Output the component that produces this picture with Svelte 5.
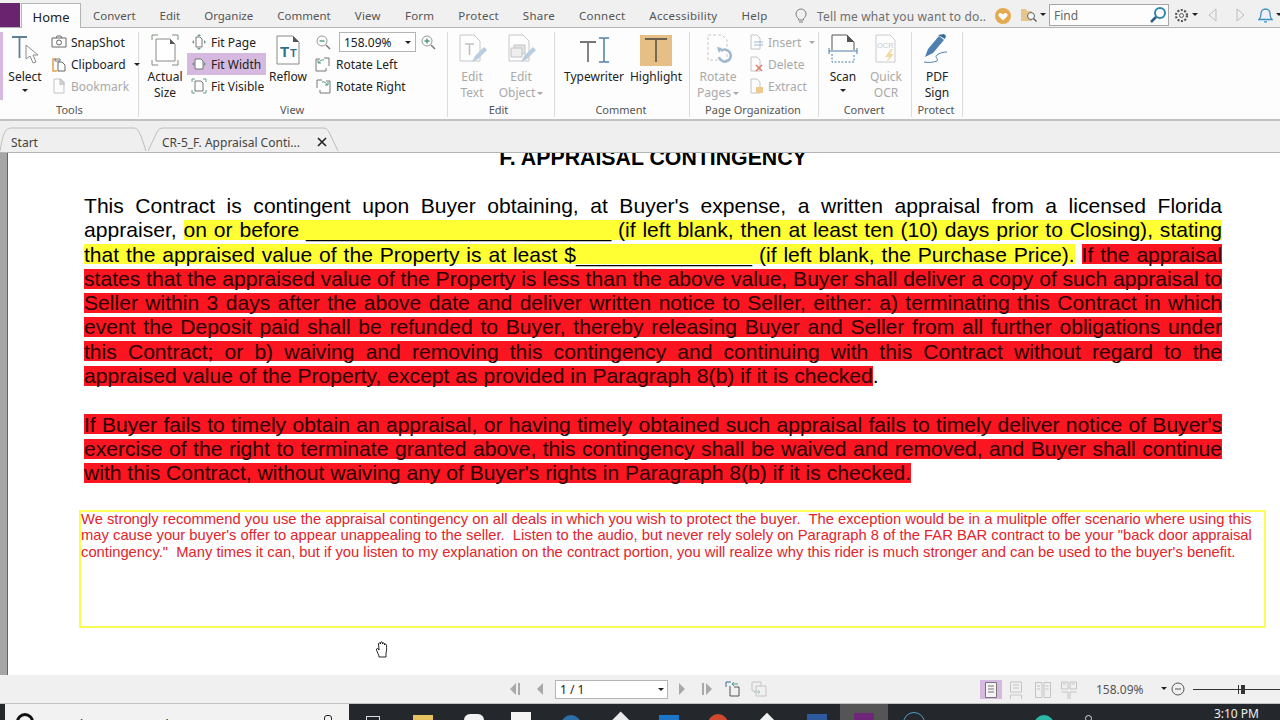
<script lang="ts">
  const menuTabs = ['Convert', 'Edit', 'Organize', 'Comment', 'View', 'Form', 'Protect', 'Share', 'Connect', 'Accessibility', 'Help']
</script>

<div class="window">
  <header class="menubar">
    <div class="file-tab"></div>
    <div class="home-tab">Home</div>
    {#each menuTabs as tab}
      <div class="menu-item">{tab}</div>
    {/each}
    <svg class="bulb" width="14" height="16" viewBox="0 0 14 16" fill="none" stroke="#7d7d7d"><path d="M4.5 10.5C2.5 9 2 7.5 2 6a5 5 0 0 1 10 0c0 1.5-.5 3-2.500 4.500V12h-5zM5 14h4"/></svg>
    <div class="tell-me">Tell me what you want to do..</div>
    <svg class="heart" width="18" height="18" viewBox="0 0 18 18"><circle cx="9" cy="9" r="8" fill="#e5a94f"/><path d="M9 13.500 4.800 9.200C3.500 7.500 5.800 5 7.500 6.200L9 7.500l1.500-1.300c1.700-1.200 4 1.300 2.700 3z" fill="#fff"/></svg>
    <svg class="folder" width="18" height="16" viewBox="0 0 18 16" fill="none"><path d="M1 2h5l1 2h5v10H1z" fill="#e7c68e"/><circle cx="11" cy="9" r="3.500" fill="#f5f5f5" stroke="#666"/><path d="m13.500 11.500 3 3" stroke="#555" stroke-width="1.300"/></svg>
    <span class="caret dark folder-caret"></span>
    <div class="find">
      <span>Find</span>
      <svg width="18" height="18" viewBox="0 0 18 18" fill="none"><circle cx="11" cy="7" r="5" stroke="#2f86a8" stroke-width="2"/><path d="m7 11-5 5" stroke="#2b5d8f" stroke-width="2.500"/></svg>
    </div>
    <svg class="gear" width="15" height="15" viewBox="0 0 15 15" fill="none" stroke="#555"><circle cx="7.500" cy="7.500" r="2"/><circle cx="7.500" cy="7.500" r="5.500" stroke-width="2.200" stroke-dasharray="2 1.500"/></svg>
    <span class="caret dark gear-caret"></span>
    <svg class="nav-left" width="9" height="14" viewBox="0 0 9 14" fill="none" stroke="#bdbdbd"><path d="M8 1 1 7l7 6z"/></svg>
    <svg class="nav-right" width="9" height="14" viewBox="0 0 9 14" fill="none" stroke="#bdbdbd"><path d="m1 1 7 6-7 6z"/></svg>
    <svg class="bell" width="15" height="16" viewBox="0 0 15 16" fill="none" stroke="#3d8fc2" stroke-width="1.300"><path d="M1 12.500h13c-1.500-1.500-2-2.500-2-6a4.500 4.500 0 0 0-9 0c0 3.500-.5 4.500-2 6zM6 14.800h3"/></svg>
    <span class="caret dark bell-caret"></span>
  </header>

  <section class="ribbon">
    <div class="strip"></div>

    <div class="group tools">
      <div class="group-body">
        <div class="big select-btn">
          <svg width="36" height="36" viewBox="0 0 36 36" fill="none"><path d="M5 5h15M12.500 5v21" stroke="#5c8196" stroke-width="1.800"/><path d="M19 13v14l4-3 3 7 3-1-3-7h5z" fill="#fff" stroke="#8c8c8c"/></svg>
          <span>Select</span>
          <span class="caret dark"></span>
        </div>
        <div class="col tools-col">
          <div class="row">
            <svg width="16" height="16" viewBox="0 0 16 16" fill="none" stroke="#666"><path d="M1 4h14v9H1zM5 4l1-2h4l1 2"/><circle cx="8" cy="8.500" r="2.500"/></svg>
            <span>SnapShot</span>
          </div>
          <div class="row">
            <svg width="16" height="16" viewBox="0 0 16 16" fill="none"><path d="M5 3H2v12h4" stroke="#e0a04a" stroke-width="1.500"/><path d="M7 6h4l3 3v6H7z" fill="#fff" stroke="#666"/><path d="M4 3h5v2H4z" fill="#fff" stroke="#777"/></svg>
            <span>Clipboard</span>
            <span class="caret dark"></span>
          </div>
          <div class="row off">
            <svg width="16" height="16" viewBox="0 0 16 16" fill="none" stroke="#c4c4c4"><path d="M3 1h7l3 3v11H3z"/><path d="M9 1v6l2-1 2 1V4z" fill="#d0d0d0"/></svg>
            <span>Bookmark</span>
          </div>
        </div>
      </div>
      <div class="group-label">Tools</div>
    </div>

    <div class="group view">
      <div class="group-body">
        <div class="big actual-btn">
          <svg width="36" height="36" viewBox="0 0 36 36" fill="none"><path d="M9 7h14l5 5v17H9z" fill="#fff" stroke="#8a8a8a"/><path d="M23 7v5h5z" fill="#555"/><path d="M5 8V3h6M31 8V3h-6M5 28v5h6M31 28v5h-6" stroke="#7f8f7f"/></svg>
          <span>Actual</span>
          <span>Size</span>
        </div>
        <div class="col fit-col">
          <div class="row">
            <svg width="16" height="16" viewBox="0 0 16 16" fill="none"><path d="M5 3h4l2 2v8H5z" stroke="#777"/><path d="m8 0-2 2h4zm0 16-2-2h4zM1 8l2-2v4zm14 0-2-2v4z" fill="#6a9a8a"/></svg>
            <span>Fit Page</span>
          </div>
          <div class="row active">
            <svg width="16" height="16" viewBox="0 0 16 16" fill="none"><path d="M4 3h6l2 2v8H4z" fill="#fff" stroke="#777"/><path d="M1 8l2-2v4zm14 0-2-2v4z" fill="#6a9a8a"/></svg>
            <span>Fit Width</span>
          </div>
          <div class="row">
            <svg width="16" height="16" viewBox="0 0 16 16" fill="none"><path d="M4 3h6l2 2v8H4z" stroke="#777"/><path d="M1 4V1h3M15 4V1h-3M1 12v3h3M15 12v3h-3" stroke="#6a9a8a"/></svg>
            <span>Fit Visible</span>
          </div>
        </div>
        <div class="big reflow-btn">
          <svg width="36" height="36" viewBox="0 0 36 36" fill="none"><path d="M7 4h16l6 6v22H7z" fill="#fff" stroke="#8a8a8a"/><path d="M23 4v6h6z" fill="#555"/><text x="10" y="25" class="reflow-t">T</text><text x="20" y="25" class="reflow-s">T</text></svg>
          <span>Reflow</span>
        </div>
        <div class="col zoom-col">
          <div class="row zoom-row">
            <svg width="16" height="16" viewBox="0 0 16 16" fill="none"><circle cx="7" cy="7" r="5" stroke="#999"/><path d="M4.500 7h5" stroke="#4b9a7e" stroke-width="1.400"/><path d="m11 11 4 4" stroke="#777" stroke-width="1.500"/></svg>
            <div class="zoom-box">158.09%<span class="caret dark"></span></div>
            <svg width="16" height="16" viewBox="0 0 16 16" fill="none"><circle cx="7" cy="7" r="5" stroke="#999"/><path d="M4.500 7h5M7 4.500v5" stroke="#4b9a7e" stroke-width="1.400"/><path d="m11 11 4 4" stroke="#777" stroke-width="1.500"/></svg>
          </div>
          <div class="row rotate">
            <svg width="16" height="16" viewBox="0 0 16 16" fill="none" stroke="#777"><path d="M5 3H1v12h10v-3M9 2h5v8"/><path d="M4 7a4 4 0 0 1 5-3M3 4v3h3" stroke="#4b9a7e"/></svg>
            <span>Rotate Left</span>
          </div>
          <div class="row rotate">
            <svg width="16" height="16" viewBox="0 0 16 16" fill="none" stroke="#777"><path d="M11 3h4v12H5v-3M7 2H2v8"/><path d="M12 7a4 4 0 0 0-5-3M13 4v3h-3" stroke="#4b9a7e"/></svg>
            <span>Rotate Right</span>
          </div>
        </div>
      </div>
      <div class="group-label">View</div>
    </div>

    <div class="group edit">
      <div class="group-body">
        <div class="big off edit-btn">
          <svg width="36" height="36" viewBox="0 0 36 36" fill="none"><path d="M6 3h14l6 6v20H6z" stroke="#c8c8c8"/><path d="M11 12h9M15.500 12v11" stroke="#c0c0c0" stroke-width="1.600"/><path d="m18 30 3-6 9-9 3 3-9 9z" fill="#b9cde0"/></svg>
          <span>Edit</span>
          <span>Text</span>
        </div>
        <div class="big off edit-btn">
          <svg width="36" height="36" viewBox="0 0 36 36" fill="none"><path d="M6 3h14l6 6v20H6z" stroke="#c8c8c8"/><path d="M11 13h11v9H11z" fill="#e4e4e4" stroke="#c4c4c4"/><path d="M8 16h11v9H8z" fill="#eee" stroke="#c4c4c4"/><path d="m18 30 3-6 9-9 3 3-9 9z" fill="#b9cde0"/></svg>
          <span>Edit</span>
          <span>Object<i class="caret"></i></span>
        </div>
      </div>
      <div class="group-label">Edit</div>
    </div>

    <div class="group comment">
      <div class="group-body">
        <div class="big typewriter-btn">
          <svg width="36" height="36" viewBox="0 0 36 36" fill="none"><path d="M4 10h16M12 10v20" stroke="#777" stroke-width="1.800"/><path d="M23 6h4l1 1 1-1h4M28 7v22M23 30h4l1-1 1 1h4" stroke="#4d7fa8" stroke-width="1.500"/></svg>
          <span>Typewriter</span>
        </div>
        <div class="big highlight-btn">
          <svg width="36" height="36" viewBox="0 0 36 36" fill="none"><path d="M2 3h32v31H2z" fill="#e5bf85"/><path d="M7 7h22M18 7v23" stroke="#6c6050" stroke-width="1.800"/></svg>
          <span>Highlight</span>
        </div>
      </div>
      <div class="group-label">Comment</div>
    </div>

    <div class="group pages">
      <div class="group-body">
        <div class="big off pages-btn">
          <svg width="36" height="36" viewBox="0 0 36 36" fill="none"><path d="M8 3h14l5 5v20H8z" stroke="#c8c8c8" stroke-dasharray="3 2"/><path d="M21 19a6 6 0 1 1-2 6" stroke="#9db8cf" stroke-width="2.500"/><path d="m17 15 5 1-3 5z" fill="#9db8cf"/></svg>
          <span>Rotate</span>
          <span>Pages<i class="caret"></i></span>
        </div>
        <div class="col pages-col">
          <div class="row off">
            <svg width="16" height="16" viewBox="0 0 16 16" fill="none" stroke="#c4c4c4"><path d="M3 1h6l3 3v11H3z"/><path d="M6 8h9M6 11h9" stroke="#9db8cf"/></svg>
            <span>Insert</span>
            <span class="caret"></span>
          </div>
          <div class="row off">
            <svg width="16" height="16" viewBox="0 0 16 16" fill="none" stroke="#c4c4c4"><path d="M3 1h6l3 3v11H3z"/><path d="m8 9 6 6m0-6-6 6" stroke="#e07a6a" stroke-width="1.500"/></svg>
            <span>Delete</span>
          </div>
          <div class="row off">
            <svg width="16" height="16" viewBox="0 0 16 16" fill="none" stroke="#c4c4c4"><path d="M3 1h6l3 3v11H3z"/><path d="M8 9h7v6H8z" fill="#edcb8e" stroke="none"/></svg>
            <span>Extract</span>
          </div>
        </div>
      </div>
      <div class="group-label">Page Organization</div>
    </div>

    <div class="group convert">
      <div class="group-body">
        <div class="big scan-btn">
          <svg width="36" height="36" viewBox="0 0 36 36" fill="none"><path d="M7 18V3h15l7 7v8" stroke="#555"/><path d="M22 3v7h7z" fill="#555"/><path d="M4 19h28" stroke="#4d7fa8"/><path d="M4 16v6M32 16v6" stroke="#4d7fa8"/><path d="M7 22v8h22v-8" stroke="#4d7fa8" stroke-dasharray="2 1.500"/></svg>
          <span>Scan</span>
          <span class="caret dark"></span>
        </div>
        <div class="big off ocr-btn">
          <svg width="36" height="36" viewBox="0 0 36 36" fill="none"><path d="M8 3h14l5 5v22H8z" stroke="#ccc"/><text x="9" y="16" class="ocr-text">OCR</text><path d="m23 17-6 8h4l-3 6 8-9h-4l3-5z" fill="#f0d9a4"/></svg>
          <span>Quick</span>
          <span>OCR</span>
        </div>
      </div>
      <div class="group-label">Convert</div>
    </div>

    <div class="group protect">
      <div class="group-body">
        <div class="big sign-btn">
          <svg width="36" height="36" viewBox="0 0 36 36" fill="none"><path d="m6 25 3-8 11-13 5 4-11 13z" fill="#4d7fb0"/><path d="m19 3 6-1 2 2-1 3z" fill="#3b6b9b"/><path d="M5 30c5 1 11 0 13-1 2-2-3-4 0-6 2-2 7-3 10-3" stroke="#4d7fb0"/></svg>
          <span>PDF</span>
          <span>Sign</span>
        </div>
      </div>
      <div class="group-label">Protect</div>
    </div>
  </section>

  <nav class="doc-tabs">
    <div class="doc-tab start">
      <svg width="152" height="25" viewBox="0 0 152 25" fill="none"><path d="M0 24C3 8 4 1 12 1h122c5 0 7 8 12 23" stroke="#bdbdbd"/></svg>
      <span>Start</span>
    </div>
    <div class="doc-tab current">
      <svg width="192" height="25" viewBox="0 0 192 25" fill="none"><path d="M0 24 9 5c2-3 3-4 6-4h160c3 0 4 1 6 4l9 19" stroke="#bdbdbd"/></svg>
      <span>CR-5_F. Appraisal Conti...</span>
      <svg class="close" width="10" height="10" viewBox="0 0 10 10"><path d="m1 1 8 8m0-8-8 8" stroke="#222" stroke-width="1.600"/></svg>
    </div>
  </nav>

  <main class="viewer">
    <div class="side-bar"></div>
    <div class="page">
      <h1>F. APPRAISAL CONTINGENCY</h1>

      <div class="para first">
        <div class="line">This Contract is contingent upon Buyer obtaining, at Buyer's expense, a written appraisal from a licensed Florida</div>
        <div class="line">appraiser, <span class="yel">on or before __________________________ (if left blank, then at least ten (10) days prior to Closing), stating</span></div>
        <div class="line"><span class="yel">that the appraised value of the Property is at least $_______________ (if left blank, the Purchase Price).</span> <span class="red">If the appraisal</span></div>
        <div class="line tight"><span class="red">states that the appraised value of the Property is less than the above value, Buyer shall deliver a copy of such appraisal to</span></div>
        <div class="line tight"><span class="red">Seller within 3 days after the above date and deliver written notice to Seller, either: a) terminating this Contract in which</span></div>
        <div class="line"><span class="red">event the Deposit paid shall be refunded to Buyer, thereby releasing Buyer and Seller from all further obligations under</span></div>
        <div class="line"><span class="red">this Contract; or b) waiving and removing this contingency and continuing with this Contract without regard to the</span></div>
        <div class="line last"><span class="red">appraised value of the Property, except as provided in Paragraph 8(b) if it is checked</span>.</div>
      </div>

      <div class="para">
        <div class="line tight"><span class="red">If Buyer fails to timely obtain an appraisal, or having timely obtained such appraisal fails to timely deliver notice of Buyer's</span></div>
        <div class="line tight"><span class="red">exercise of the right to terminate granted above, this contingency shall be waived and removed, and Buyer shall continue</span></div>
        <div class="line last"><span class="red">with this Contract, without waiving any of Buyer's rights in Paragraph 8(b) if it is checked.</span></div>
      </div>

      <div class="note">
        <p>We strongly recommend you use the appraisal contingency on all deals in which you wish to protect the buyer.  The exception would be in a mulitple offer scenario where using this</p>
        <p>may cause your buyer's offer to appear unappealing to the seller.  Listen to the audio, but never rely solely on Paragraph 8 of the FAR BAR contract to be your "back door appraisal</p>
        <p>contingency."  Many times it can, but if you listen to my explanation on the contract portion, you will realize why this rider is much stronger and can be used to the buyer's benefit.</p>
      </div>
    </div>
    <svg class="hand" width="16" height="18" viewBox="0 0 16 18" fill="#fff" stroke="#111" stroke-width=".9"><path d="M4 16 1.500 10c-.5-1.500 1-2 2-1L4 10 3.500 4c0-1.500 1.800-1.500 2 0V3c0-1.500 2-1.500 2 0v1c0-1.500 2-1.500 2 0v1c.2-1.300 2-1.200 2 .2 0 3 .5 5-.5 7.800L11 17H4z"/></svg>
  </main>

  <footer class="statusbar">
    <svg class="st first-page" width="14" height="14" viewBox="0 0 14 14" fill="#a9a9a9"><path d="M8 1 2 7l6 6zM10 1h2v12h-2z"/></svg>
    <svg class="st prev" width="8" height="14" viewBox="0 0 8 14" fill="#a9a9a9"><path d="M7 1 1 7l6 6z"/></svg>
    <div class="page-box">1 / 1<span class="caret dark"></span></div>
    <svg class="st next" width="8" height="14" viewBox="0 0 8 14" fill="#a9a9a9"><path d="m1 1 6 6-6 6z"/></svg>
    <svg class="st last-page" width="14" height="14" viewBox="0 0 14 14" fill="#a9a9a9"><path d="M6 1l6 6-6 6zM2 1h2v12H2z"/></svg>
    <svg class="st back" width="16" height="16" viewBox="0 0 16 16" fill="none" stroke="#555"><path d="M5 5v10h9V6H9"/><path d="M1 1h5" stroke="#3b6b9b"/><path d="M1 1v5" stroke="#3b6b9b"/><path d="M13 3H7m2-2L7 3l2 2" stroke="#4b9a7e"/></svg>
    <svg class="st forward" width="16" height="16" viewBox="0 0 16 16" fill="none" stroke="#c4c4c4"><path d="M1 1h9v4M5 5h10v10H5zM1 1v9h3"/><path d="M3 11h6m-2-2 2 2-2 2" stroke="#a8c8b8"/></svg>

    <div class="view-mode active">
      <svg width="12" height="16" viewBox="0 0 12 16" fill="#f4f4f4" stroke="#777"><path d="M.5.500h11v15H.5zM3 4h6M3 7h6M3 10h6"/></svg>
    </div>
    <div class="view-mode">
      <svg width="12" height="18" viewBox="0 0 12 18" fill="none" stroke="#c4c4c4"><path d="M.5 1h11v10H.5zM.5 14h11v4M.5 14v4M3 4h6M3 7h6"/></svg>
    </div>
    <div class="view-mode">
      <svg width="16" height="16" viewBox="0 0 16 16" fill="none" stroke="#c4c4c4"><path d="M.5.500h6.500v15H.5zM9 .500h6.500v15H9zM2 4h3M2 7h3M10.500 4h3M10.500 7h3"/></svg>
    </div>
    <div class="view-mode">
      <svg width="16" height="18" viewBox="0 0 16 18" fill="none" stroke="#c4c4c4"><path d="M.5 1H7v7H.5zM9 1h6.500v7H9zM.5 11H7v7M9 18v-7h6.500M2 3h3M10.500 3h3"/></svg>
    </div>

    <div class="zoom-value">158.09%</div>
    <span class="caret dark zoom-caret"></span>
    <svg class="zoom-minus" width="14" height="14" viewBox="0 0 14 14" fill="none" stroke="#555"><circle cx="7" cy="7" r="6"/><path d="M4 7h6"/></svg>
    <div class="slider">
      <span class="tick"></span>
      <span class="thumb"></span>
    </div>
  </footer>

  <div class="taskbar">
    <div class="search">
      <span class="ring"></span>
      <span class="search-text">Type here to search</span>
      <span class="mic"></span>
    </div>
    <div class="task-icons">
      <span class="ti taskview"></span>
      <span class="ti folder-t"></span>
      <span class="ti bag"></span>
      <span class="ti dark-box"></span>
      <span class="ti edge"></span>
      <span class="ti drop"></span>
      <span class="ti blue-a"></span>
      <span class="ti chrome"></span>
      <span class="ti white-b"></span>
      <span class="ti word"></span>
      <span class="ti foxit"></span>
      <span class="ti circle-c"></span>
    </div>
    <div class="tray">
      <span class="ti teal"></span>
      <span class="ti person"></span>
      <span class="clock">3:10 PM</span>
    </div>
  </div>
</div>

<style>
  :global(body) {
    margin: 0;
    background: #f0f0f0;
  }

  .window {
    position: relative;
    display: flex;
    flex-direction: column;
    width: 1280px;
    height: 720px;
    overflow: hidden;
    font-family: "Noto Sans", "Liberation Sans", sans-serif;
    font-size: 12px;
    color: #222;
  }

  .caret {
    display: inline-block;
    width: 0;
    height: 0;
    border: 3px solid transparent;
    border-top: 3px solid #a8a8a8;
    border-bottom: 0;
    vertical-align: middle;
  }

  .caret.dark {
    border-top-color: #222;
  }

  /* top menu row */
  .menubar {
    position: relative;
    display: flex;
    align-items: flex-end;
    flex: none;
    height: 27px;
    border-bottom: 1px solid #b4b4b4;
    background: #f0f0f0;
  }

  .file-tab {
    width: 20px;
    height: 24px;
    background: #69246f;
  }

  .home-tab {
    width: 60px;
    height: 25px;
    margin: 0 0 -1px 1px;
    border: 1px solid #b4b4b4;
    border-bottom: 0;
    background: #fdfdfd;
    text-align: center;
    line-height: 26px;
    font-size: 13px;
    box-sizing: border-box;
  }

  .menu-item {
    padding: 0 12px;
    height: 23px;
    line-height: 23px;
    font-size: 11.500px;
    color: #555;
  }

  .menu-item:nth-child(n+7) {
    letter-spacing: .25px;
  }

  .bulb,
  .tell-me,
  .heart,
  .folder,
  .folder-caret,
  .find,
  .gear,
  .gear-caret,
  .nav-left,
  .nav-right,
  .bell,
  .bell-caret {
    position: absolute;
  }

  .bulb { left: 794px; top: 8px; }
  .tell-me { left: 817px; top: 8px; color: #6e6e6e; white-space: nowrap; letter-spacing: .15px; }
  .heart { left: 994px; top: 7px; }
  .folder { left: 1020px; top: 7px; }
  .folder-caret { left: 1040px; top: 13px; }

  .find {
    left: 1049px;
    top: 4px;
    display: flex;
    align-items: center;
    justify-content: space-between;
    box-sizing: border-box;
    width: 120px;
    height: 22px;
    border: 1px solid #a8a8a8;
    padding: 0 1px 0 4px;
    background: #fdfdfd;
    color: #666;
  }

  .gear { left: 1174px; top: 8px; }
  .gear-caret { left: 1192px; top: 13px; }
  .nav-left { left: 1208px; top: 8px; }
  .nav-right { left: 1236px; top: 8px; }
  .bell { left: 1258px; top: 7px; }
  .bell-caret { left: 1276px; top: 13px; }

  /* ribbon */
  .ribbon {
    display: flex;
    flex: none;
    box-sizing: border-box;
    height: 93px;
    padding-top: 4px;
    border-bottom: 2px solid #c2c2c2;
    background: #fdfdfd;
  }

  .strip {
    width: 3px;
    height: 68px;
    background: #d5b9de;
  }

  .group {
    display: flex;
    flex-direction: column;
    box-sizing: border-box;
    height: 85px;
    border-right: 1px solid #dcdcdc;
  }

  .tools { width: 136px; }
  .view { width: 309px; }
  .edit { width: 107px; }
  .comment { width: 135px; }
  .pages { width: 129px; }
  .convert { width: 93px; }
  .protect { width: 51px; }

  .group-body {
    display: flex;
    height: 71px;
  }

  .group-label {
    padding-right: 2px;
    text-align: center;
    font-size: 11px;
    line-height: 14px;
    color: #555;
    white-space: nowrap;
  }

  .edit .group-label {
    padding-right: 5px;
  }

  .big {
    display: flex;
    flex-direction: column;
    align-items: center;
    flex: none;
    line-height: 16px;
    white-space: nowrap;
    text-align: center;
  }

  .big svg {
    flex: none;
    height: 36px;
    margin-bottom: 1px;
  }

  .big .caret {
    margin-top: 4px;
  }

  .big i.caret {
    margin: 0 0 0 2px;
  }

  .off,
  .off .caret {
    color: #a9a9a9;
  }

  .col {
    display: flex;
    flex-direction: column;
    flex: none;
    margin-top: -1px;
  }

  .row {
    display: flex;
    align-items: center;
    gap: 4px;
    height: 22px;
    white-space: nowrap;
  }

  .row svg {
    flex: none;
  }

  .row .caret {
    margin-left: 4px;
  }

  .select-btn { width: 44px; }
  .tools-col { margin-left: 3px; }
  .tools-col .row { padding-left: 1px; }

  .actual-btn { width: 48px; margin-left: 2px; }
  .fit-col { width: 79px; margin-left: -2px; }
  .fit-col .row { padding-left: 4px; }
  .fit-col .active { background: #d5b9de; }
  .reflow-btn { width: 44px; }
  .zoom-col { margin-left: 5px; }
  .zoom-row { gap: 8px; }
  .rotate { gap: 5px; }

  .reflow-t,
  .reflow-s {
    font-family: "Liberation Sans", sans-serif;
    font-weight: 700;
    fill: #2f6f8f;
  }

  .reflow-t { font-size: 15px; }
  .reflow-s { font-size: 11px; }

  .zoom-box {
    display: flex;
    align-items: center;
    justify-content: space-between;
    box-sizing: border-box;
    width: 77px;
    height: 20px;
    margin-right: -4px;
    border: 1px solid #b4b4b4;
    padding: 0 4px 0 4px;
    background: #fff;
  }

  .edit-btn { width: 48px; }
  .edit-btn + .edit-btn { margin-left: 1px; }
  .typewriter-btn { width: 78px; }
  .highlight-btn { width: 46px; }
  .pages-btn { width: 56px; }
  .pages-col .row { padding-left: 2px; }
  .scan-btn { width: 48px; }
  .ocr-btn { width: 38px; }
  .sign-btn { width: 50px; }

  .ocr-text {
    font-family: "Liberation Sans", sans-serif;
    font-size: 7.500px;
    fill: #bfcbd6;
  }

  /* document tabs */
  .doc-tabs {
    display: flex;
    flex: none;
    align-items: flex-end;
    height: 32px;
    border-bottom: 1px solid #b4b4b4;
    box-sizing: border-box;
    background: #efefef;
  }

  .doc-tab {
    position: relative;
    display: flex;
    align-items: center;
    flex: none;
    height: 24px;
    padding-top: 4px;
    color: #444;
    white-space: nowrap;
  }

  .doc-tab svg:first-child {
    position: absolute;
    left: 0;
    bottom: 0;
  }

  .start {
    width: 148px;
    padding-left: 11px;
    box-sizing: border-box;
  }

  .current {
    width: 192px;
    padding-left: 14px;
    box-sizing: border-box;
  }

  .close {
    position: absolute;
    right: 13px;
    top: 9px;
  }

  /* document */
  .viewer {
    position: relative;
    display: flex;
    flex: none;
    height: 522px;
    overflow: hidden;
    background: #fff;
  }

  .side-bar {
    flex: none;
    width: 7px;
    border-right: 1px solid #666;
    background: #a6a6a6;
  }

  .page {
    flex: 1;
    padding-left: 71px;
    font-family: "Liberation Sans", Arial, sans-serif;
    color: #000;
  }

  h1 {
    margin: -7px 0 0 5px;
    width: 1138px;
    font-size: 21.300px;
    font-weight: 700;
    line-height: 24.300px;
    text-align: center;
  }

  .para {
    width: 1138px;
    margin: 24.300px 0 0 5px;
    font-size: 21.100px;
    line-height: 24.300px;
  }

  .para.first {
    margin-top: 23.700px;
  }

  .line {
    text-align: justify;
    text-align-last: justify;
  }

  /* these runs are a hair too long at this size: justify spreads them back out */
  .line.tight {
    word-spacing: -1px;
  }

  .line.last {
    text-align-last: left;
  }

  .yel,
  .red {
    background-repeat: no-repeat;
    background-position: 0 55%;
    background-size: 100% 20px;
  }

  .yel {
    background-image: linear-gradient(#ffff33, #ffff33);
  }

  .red {
    background-image: linear-gradient(#fb1520, #fb1520);
    color: #2a0000;
  }

  .note {
    box-sizing: border-box;
    width: 1187px;
    height: 118px;
    margin-top: 24px;
    border: 2px solid #fcfc55;
    font-size: 14.770px;
    line-height: 16.500px;
    color: #e3242b;
  }

  .note p {
    margin: 0;
    white-space: pre;
  }

  .note p:first-child {
    margin-top: -1px;
  }

  .hand {
    position: absolute;
    left: 375px;
    top: 487px;
  }

  /* bottom bar */
  .statusbar {
    position: relative;
    flex: none;
    height: 29px;
    box-sizing: border-box;
    border-bottom: 1px solid #c4c4c4;
    background: #f0f0f0;
  }

  .st,
  .page-box,
  .view-mode,
  .zoom-value,
  .zoom-caret,
  .zoom-minus,
  .slider {
    position: absolute;
  }

  .first-page { left: 508px; top: 7px; }
  .prev { left: 536px; top: 7px; }
  .next { left: 678px; top: 7px; }
  .last-page { left: 700px; top: 7px; }
  .back { left: 725px; top: 6px; }
  .forward { left: 751px; top: 6px; }

  .page-box {
    left: 555px;
    top: 5px;
    display: flex;
    align-items: center;
    justify-content: space-between;
    box-sizing: border-box;
    width: 113px;
    height: 19px;
    border: 1px solid #b4b4b4;
    padding: 0 3px 0 4px;
    background: #fff;
  }

  .view-mode {
    top: 5px;
    display: flex;
    align-items: center;
    justify-content: center;
    width: 22px;
    height: 19px;
  }

  .view-mode.active { left: 980px; background: #d5b9de; }
  .view-mode.active + .view-mode { left: 1005px; }
  .view-mode.active + .view-mode + .view-mode { left: 1032px; }
  .view-mode.active + .view-mode + .view-mode + .view-mode { left: 1058px; }

  .zoom-value { left: 1096px; top: 6px; color: #555; }
  .zoom-caret { left: 1161px; top: 12px; }
  .zoom-minus { left: 1171px; top: 7px; }

  .slider {
    left: 1193px;
    top: 14px;
    width: 87px;
    height: 1px;
    background: #333;
  }

  .tick {
    position: absolute;
    left: 45px;
    top: -4px;
    width: 1px;
    height: 9px;
    background: #333;
  }

  .thumb {
    position: absolute;
    left: 48px;
    top: -4px;
    width: 4px;
    height: 9px;
    background: #333;
  }

  /* windows taskbar, only its top shows */
  .taskbar {
    display: flex;
    flex: none;
    height: 16px;
    overflow: hidden;
    background: #24272c;
  }

  .search {
    position: relative;
    flex: none;
    width: 344px;
    height: 30px;
    margin-left: 5px;
    background: #f2f2f2;
  }

  .ring {
    position: absolute;
    left: 11px;
    top: 9px;
    width: 12px;
    height: 12px;
    border: 3px solid #111;
    border-radius: 50%;
  }

  .search-text {
    position: absolute;
    left: 40px;
    top: 11px;
    font-size: 14px;
    color: #333;
  }

  .mic {
    position: absolute;
    left: 319px;
    top: 11px;
    width: 6px;
    height: 10px;
    border: 1px solid #222;
    border-radius: 3px;
  }

  .task-icons {
    position: relative;
    flex: 1;
  }

  .ti {
    position: absolute;
    display: block;
    top: 11px;
    width: 20px;
    height: 20px;
  }

  .taskview { left: 17px; top: 12px; width: 12px; height: 12px; border: 1px solid #ddd; background: transparent; }
  .folder-t { left: 64px; background: #e8c25e; }
  .bag { left: 115px; top: 10px; background: #f2f2f2; border-radius: 6px 6px 0 0; }
  .dark-box { left: 162px; top: 8px; background: #f4f4f4; }
  .edge { left: 212px; background: #2c6ea8; border-radius: 50%; }
  .drop { left: 262px; top: 11px; width: 18px; background: #eaeaea; transform: rotate(45deg); }
  .blue-a { left: 310px; top: 11px; background: #1a76c8; }
  .chrome { left: 359px; top: 10px; background: #d0492f; border-radius: 50%; }
  .white-b { left: 408px; top: 13px; background: #f2f2f2; transform: rotate(45deg); }
  .word { left: 458px; top: 10px; background: #2c5a9e; }
  .foxit { left: 491px; top: 0; width: 48px; height: 16px; background: #555; }
  .foxit::after { content: ''; position: absolute; left: 14px; top: 9px; width: 20px; height: 12px; background: #6f2578; }
  .circle-c { left: 554px; top: 8px; border: 1px solid #4f9dc7; border-radius: 50%; }

  .tray {
    position: relative;
    flex: none;
    width: 400px;
  }

  .teal {
    left: 154px;
    top: 11px;
    background: #29b7a8;
    border-radius: 50%;
  }

  .person {
    left: 205px;
    top: 11px;
    width: 5px;
    height: 5px;
    border: 1px solid #ddd;
    border-radius: 50%;
  }

  .clock {
    position: absolute;
    right: 21px;
    top: 3px;
    font-size: 12px;
    line-height: 14px;
    color: #eee;
  }
</style>
